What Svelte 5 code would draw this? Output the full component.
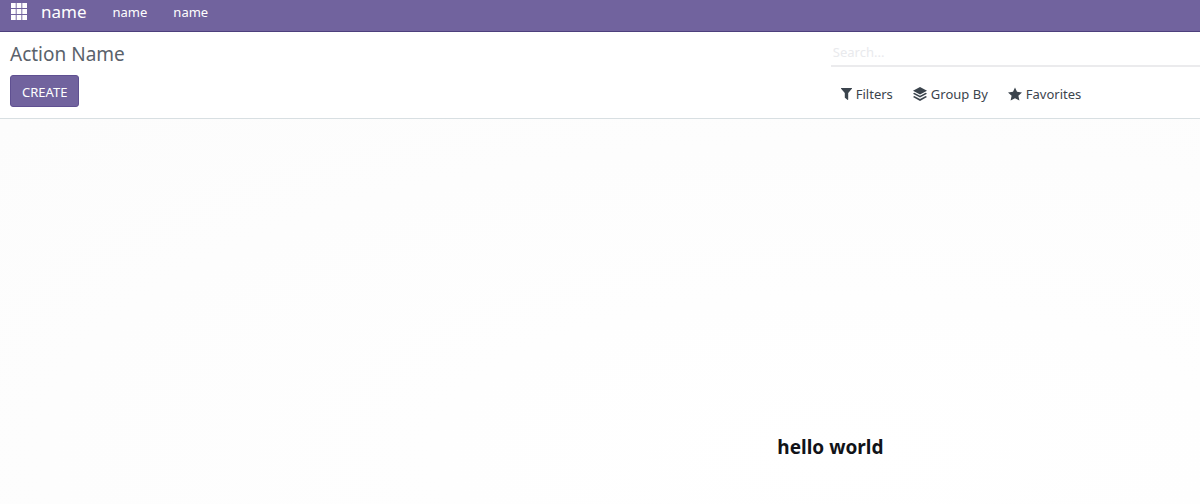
<script lang="ts">
  type SearchMenu = {
    label: string;
    viewBox: string;
    path: string;
    width: number;
  };

  const sections = ['name', 'name'];
  const cells = [0, 6, 12];

  const searchMenus: SearchMenu[] = [
    {
      label: 'Filters',
      viewBox: '0 0 11 12',
      width: 11,
      path: 'M.5 0h10c.5 0 .7.5.4.8L7.200 4.900V11.500c0 .5-.5.6-.8.3L4.200 10C4 9.800 3.800 9.700 3.800 9.500V4.900L.1.8C-.2.500 0 0 .5 0z'
    },
    {
      label: 'Group By',
      viewBox: '0 0 14 14',
      width: 14,
      path: 'M7 0l7 3.700-7 3.700-7-3.700zM1.300 5.700L7 8.700l5.700-3L14 6.700l-7 3.700L0 6.700zM1.300 9.100L7 12.100l5.700-3 1.300 1L7 14l-7-3.900z'
    },
    {
      label: 'Favorites',
      viewBox: '0 0 14 13',
      width: 14,
      path: 'M7 0l2 4.300 5 .6-3.600 3.300 1 4.800L7 10.700 2.600 13l1-4.800L0 4.900l5-.6z'
    }
  ];

  let query = $state('');
</script>

<svelte:head>
  <title>Action Name</title>
</svelte:head>

<div class="web-client">
  <nav class="navbar">
    <button class="apps" aria-label="Applications">
      <svg width="16" height="17" viewBox="0 0 17 17" preserveAspectRatio="none" fill="currentColor">
        {#each cells as y}
          {#each cells as x}
            <rect {x} {y} width="5" height="5" />
          {/each}
        {/each}
      </svg>
    </button>
    <a class="brand" href="#home">name</a>
    {#each sections as section}
      <a class="section" href="#section">{section}</a>
    {/each}
  </nav>

  <div class="control-panel">
    <div class="left">
      <h1>Action Name</h1>
      <button class="create">CREATE</button>
    </div>
    <div class="right">
      <input type="text" aria-label="Search" placeholder="Search..." bind:value={query} />
      <div class="search-options">
        {#each searchMenus as menu}
          <button>
            <svg width={menu.width} height="14" viewBox={menu.viewBox} fill="currentColor">
              <path d={menu.path} />
            </svg>
            {menu.label}
          </button>
        {/each}
      </div>
    </div>
  </div>

  <main>
    <div class="message">
      <h2>hello world</h2>
    </div>
  </main>
</div>

<style>
  :global(body) {
    margin: 0;
    font-family: 'Segoe UI', 'Noto Sans', sans-serif;
    font-size: 13px;
    color: #3b444d;
    background: white;
  }

  .web-client {
    display: flex;
    flex-direction: column;
    min-height: 100vh;
    overflow-x: hidden;
  }

  button,
  input {
    font: inherit;
    color: inherit;
    border: none;
    background: none;
    padding: 0;
  }

  button {
    cursor: pointer;
  }

  .navbar {
    display: flex;
    align-items: center;
    box-sizing: border-box;
    height: 32px;
    padding: 0 11px 8px;
    background: #71639e;
    border-bottom: 1px solid #4d3f7c;
    color: white;
  }

  .navbar a {
    color: white;
    text-decoration: none;
  }

  .apps {
    display: flex;
    margin-right: 14px;
  }

  .brand {
    margin-right: 13px;
    font-size: 17px;
    line-height: 24px;
  }

  .section {
    padding: 0 13px;
    line-height: 24px;
  }

  .control-panel {
    display: grid;
    grid-template-columns: 9fr 4fr;
    border-bottom: 1px solid #d8dfe2;
  }

  .left {
    padding: 10px 10px 11px;
  }

  h1 {
    margin: 0 0 9px;
    font-size: 19px;
    font-weight: 400;
    line-height: 24px;
    color: #5a626b;
  }

  .create {
    height: 32px;
    padding: 2px 11px 0;
    border: 1px solid #5f5091;
    border-radius: 3px;
    background: #71639e;
    color: white;
  }

  .right {
    padding-top: 8px;
  }

  input {
    display: block;
    box-sizing: border-box;
    width: 100%;
    height: 27px;
    padding: 0 2px 1px;
    border-bottom: 2px solid #ebebed;
    outline: none;
  }

  input::placeholder {
    color: #e9eaed;
    opacity: 1;
  }

  .search-options {
    display: flex;
    gap: 20px;
    padding: 17px 10px 0;
  }

  .search-options button {
    display: flex;
    align-items: center;
    gap: 4px;
    line-height: 20px;
    white-space: nowrap;
  }

  main {
    display: grid;
    flex: 1;
    background: radial-gradient(98% 120% at 69.2% 86.5%, #ffffff, #fcfcfc);
  }

  .message {
    align-self: end;
    width: 138.4%;
    padding-bottom: 43px;
    text-align: center;
  }

  h2 {
    margin: 0;
    font-size: 19px;
    font-weight: 700;
    line-height: 28px;
    color: #111318;
  }
</style>
